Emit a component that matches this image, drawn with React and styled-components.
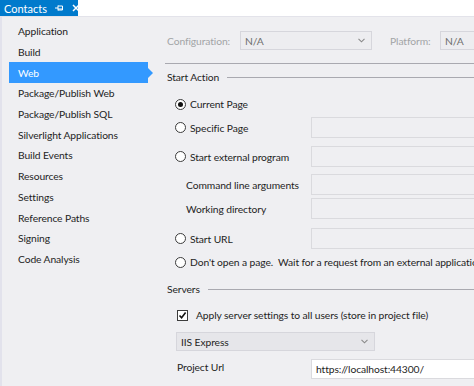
import React from "react";
import styled, { createGlobalStyle } from "styled-components";

const GlobalStyle = createGlobalStyle`
  html, body {
    margin: 0;
    padding: 0;
    background: #efeff2;
  }
  body {
    font-family: Lato, "Open Sans", sans-serif;
    font-size: 10.3px;
    letter-spacing: -0.1px;
    color: #1e1e1e;
  }
`;

const Window = styled.div`
  width: 474px;
  height: 386px;
  overflow: hidden;
  display: flex;
  flex-direction: column;
  background: #efeff2;
`;

const TabBar = styled.div`
  height: 17px;
  display: flex;
  background: #ffffff;
  border-bottom: 1px solid #e3e3ea;
  box-sizing: border-box;
`;

const Tab = styled.div`
  width: 78px;
  height: 16px;
  background: #007acc;
  color: #ffffff;
  display: flex;
  align-items: center;
  padding-left: 4px;
  box-sizing: border-box;
  font-size: 11px;
  letter-spacing: 0;
  gap: 8px;
`;

const TabIcons = styled.div`
  display: flex;
  align-items: center;
  gap: 8px;
`;

const Body = styled.div`
  flex: 1;
  display: flex;
  border-left: 2px solid #e2e2ec;
`;

const Sidebar = styled.ul`
  width: 158px;
  flex-shrink: 0;
  margin: 0;
  padding: 4px 0 0 7px;
  list-style: none;
  box-sizing: border-box;
`;

const NavItem = styled.li`
  position: relative;
  width: 139px;
  height: 20.7px;
  display: flex;
  align-items: center;
  padding-left: 9px;
  box-sizing: border-box;
  background: ${({ $active }) => ($active ? "#3399ff" : "transparent")};
  color: ${({ $active }) => ($active ? "#ffffff" : "#1e1e1e")};

  &::after {
    content: "";
    display: ${({ $active }) => ($active ? "block" : "none")};
    position: absolute;
    right: -5px;
    top: 50%;
    margin-top: -5px;
    border-left: 5px solid #3399ff;
    border-top: 5px solid transparent;
    border-bottom: 5px solid transparent;
  }
`;

const Panel = styled.div`
  flex: 1;
  min-width: 0;
  padding-left: 5px;
  display: flex;
  flex-direction: column;
`;

const ConfigRow = styled.div`
  margin-top: 14px;
  height: 19px;
  display: flex;
  align-items: center;
  padding-left: 2px;
  color: #a2a4a6;
  white-space: nowrap;
`;

const ConfigLabel = styled.span`
  width: ${({ $w }) => $w}px;
  margin-left: ${({ $ml }) => $ml || 0}px;
  flex-shrink: 0;
`;

const Combo = styled.div`
  height: 19px;
  width: ${({ $w }) => $w}px;
  box-sizing: border-box;
  border: 1px solid #d6d6dc;
  background: ${({ $disabled }) => ($disabled ? "#ededf0" : "#e6e6ea")};
  color: ${({ $disabled }) => ($disabled ? "#6d6d6d" : "#1e1e1e")};
  display: flex;
  align-items: center;
  justify-content: space-between;
  padding: 0 6px 0 4px;
  flex-shrink: 0;
`;

const Divider = styled.div`
  margin-top: 13px;
  height: 1px;
  background: #a9a9b0;
`;

const SectionHeader = styled.div`
  margin-top: ${({ $mt }) => $mt}px;
  height: 14px;
  display: flex;
  align-items: center;
  gap: 8px;
  padding-left: 2px;

  &::after {
    content: "";
    flex: 1;
    height: 1px;
    background: #a9a9b0;
  }
`;

const Row = styled.div`
  margin-top: ${({ $mt }) => $mt}px;
  height: ${({ $h }) => $h || 21}px;
  display: flex;
  align-items: center;
  white-space: nowrap;
  overflow: hidden;
`;

const Label = styled.div`
  width: ${({ $w }) => $w || 151}px;
  padding-left: ${({ $indent }) => $indent || 0}px;
  padding-bottom: ${({ $raise }) => $raise || 0}px;
  box-sizing: border-box;
  display: flex;
  align-items: center;
  gap: 4px;
  flex-shrink: 0;
`;

const TextBox = styled.div`
  flex: 1;
  align-self: stretch;
  box-sizing: border-box;
  border: 1px solid #dadade;
  border-right: none;
  background: ${({ $white }) => ($white ? "#ffffff" : "#efeff2")};
  display: flex;
  align-items: center;
  padding-left: 4px;
  margin-left: -5px;
`;

const Radio = styled.span`
  width: 11px;
  height: 11px;
  border-radius: 50%;
  border: 1px solid #3c3c3c;
  background: #ffffff;
  box-sizing: border-box;
  display: inline-flex;
  align-items: center;
  justify-content: center;
  flex-shrink: 0;

  &::after {
    content: "";
    width: 5px;
    height: 5px;
    border-radius: 50%;
    background: #111;
    display: ${({ $checked }) => ($checked ? "block" : "none")};
  }
`;

const Check = styled.span`
  width: 11px;
  height: 11px;
  border: 1px solid #3c3c3c;
  background: #ffffff;
  box-sizing: border-box;
  display: inline-flex;
  align-items: center;
  justify-content: center;
  flex-shrink: 0;
  margin-right: 4px;
`;

const Chevron = () => (
  <svg width="7" height="5" viewBox="0 0 7 5">
    <path d="M0.5 0.8 L3.5 3.8 L6.5 0.8" fill="none" stroke="#8a8a8a" strokeWidth="1.1" />
  </svg>
);

const navItems = [
  "Application",
  "Build",
  "Web",
  "Package/Publish Web",
  "Package/Publish SQL",
  "Silverlight Applications",
  "Build Events",
  "Resources",
  "Settings",
  "Reference Paths",
  "Signing",
  "Code Analysis",
];

export default function App() {
  return (
    <Window>
      <GlobalStyle />
      <TabBar>
        <Tab>
          Contacts
          <TabIcons>
            <svg width="9" height="8" viewBox="0 0 9 8">
              <path d="M0 4 H3 M3 1.5 V6.5 M3 2 H7.5 V6 H3 M3 5 H7.5" fill="none" stroke="#fff" strokeWidth="1" />
            </svg>
            <svg width="8" height="8" viewBox="0 0 8 8">
              <path d="M1 1 L7 7 M7 1 L1 7" stroke="#fff" strokeWidth="1.5" />
            </svg>
          </TabIcons>
        </Tab>
      </TabBar>
      <Body>
        <Sidebar>
          {navItems.map((item) => (
            <NavItem key={item} $active={item === "Web"}>
              {item}
            </NavItem>
          ))}
        </Sidebar>
        <Panel>
          <ConfigRow>
            <ConfigLabel $w={73}>Configuration:</ConfigLabel>
            <Combo $w={132} $disabled>
              N/A
              <Chevron />
            </Combo>
            <ConfigLabel $w={50} $ml={18}>Platform:</ConfigLabel>
            <Combo $w={60} $disabled>
              N/A
            </Combo>
          </ConfigRow>
          <Divider />
          <SectionHeader $mt={6}>Start Action</SectionHeader>

          <Row $mt={10} $h={20}>
            <Label $indent={10}>
              <Radio $checked /> Current Page
            </Label>
          </Row>
          <Row $mt={3}>
            <Label $indent={10}>
              <Radio /> Specific Page
            </Label>
            <TextBox />
          </Row>
          <Row $mt={8}>
            <Label $indent={10}>
              <Radio /> Start external program
            </Label>
            <TextBox />
          </Row>
          <Row $mt={7}>
            <Label $indent={21}>Command line arguments</Label>
            <TextBox />
          </Row>
          <Row $mt={3}>
            <Label $indent={21}>Working directory</Label>
            <TextBox />
          </Row>
          <Row $mt={9}>
            <Label $indent={10}>
              <Radio /> Start URL
            </Label>
            <TextBox />
          </Row>
          <Row $mt={3} $h={20}>
            <Label $indent={10} $w={340}>
              <Radio /> Don't open a page.&nbsp; Wait for a request from an external application.
            </Label>
          </Row>

          <SectionHeader $mt={10}>Servers</SectionHeader>

          <Row $mt={9} $h={20}>
            <Label $indent={12} $w={320}>
              <Check>
                <svg width="9" height="9" viewBox="0 0 9 9">
                  <path d="M1.5 4.5 L3.6 6.8 L7.6 1.6" fill="none" stroke="#111" strokeWidth="1.6" />
                </svg>
              </Check>
              Apply server settings to all users (store in project file)
            </Label>
          </Row>
          <Row $mt={7} $h={19}>
            <Label $indent={11} $w={215}>
              <Combo $w={199}>
                IIS Express
                <Chevron />
              </Combo>
            </Label>
          </Row>
          <Row $mt={8} $h={20}>
            <Label $indent={12} $raise={5}>Project Url</Label>
            <TextBox $white>https://localhost:44300/</TextBox>
          </Row>
        </Panel>
      </Body>
    </Window>
  );
}
